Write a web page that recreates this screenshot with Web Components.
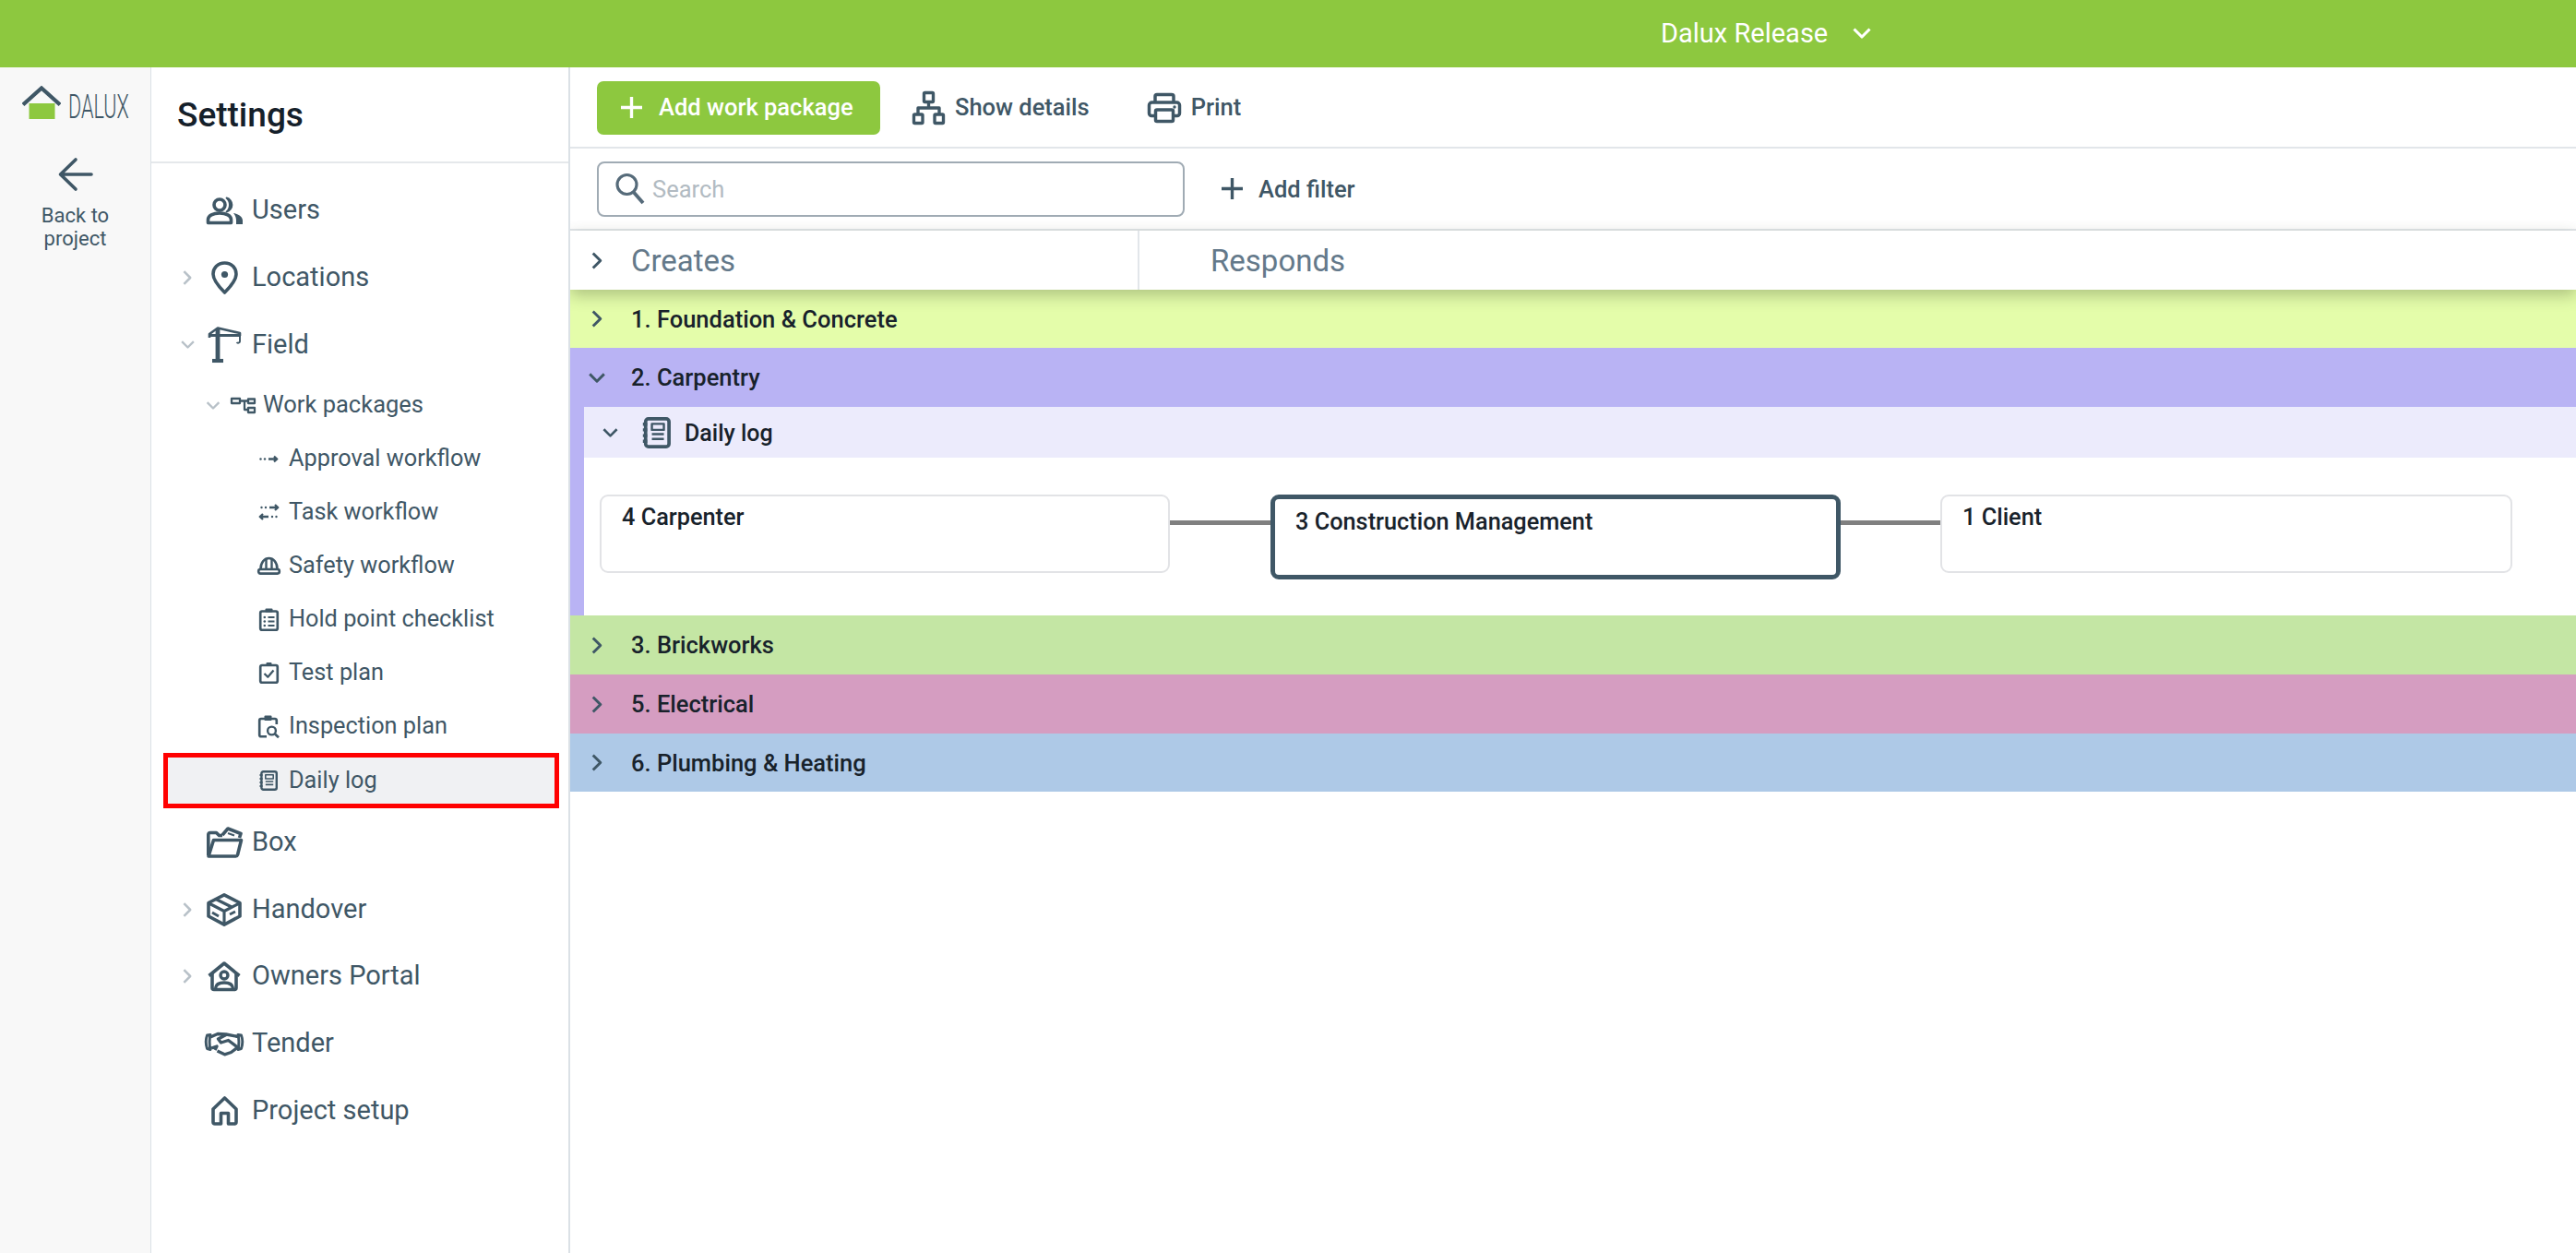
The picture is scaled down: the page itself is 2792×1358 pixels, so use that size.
<!DOCTYPE html>
<html lang="en">
<head>
<meta charset="utf-8">
<title>Dalux Settings</title>
<style>
  html, body { margin: 0; padding: 0; height: 100%; overflow: hidden; background: #fff; }
  body { font-family: Roboto, "Liberation Sans", sans-serif; color: #3f5766; }
</style>
</head>
<body>
<app-shell>
  <top-bar slot="top" label="Dalux Release"></top-bar>
  <side-rail slot="rail"></side-rail>
  <settings-panel slot="panel" heading="Settings">
    <nav-item level="0" icon="users" w="39" h="29">Users</nav-item>
    <nav-item level="0" icon="location" w="29" h="36" chev="r">Locations</nav-item>
    <nav-item level="0" icon="crane" w="37" h="39" chev="d">Field</nav-item>
    <nav-item level="1" icon="wp" w="27" h="17" chev="d">Work packages</nav-item>
    <nav-item level="2" icon="approval" w="20" h="7">Approval workflow</nav-item>
    <nav-item level="2" icon="task" w="21" h="19">Task workflow</nav-item>
    <nav-item level="2" icon="safety" w="25" h="20">Safety workflow</nav-item>
    <nav-item level="2" icon="hold" w="21" h="25">Hold point checklist</nav-item>
    <nav-item level="2" icon="test" w="21" h="23">Test plan</nav-item>
    <nav-item level="2" icon="inspection" w="23" h="25">Inspection plan</nav-item>
    <nav-item level="2" icon="daily" w="20" h="22" selected>Daily log</nav-item>
    <nav-item level="0" icon="box" w="39" h="34">Box</nav-item>
    <nav-item level="0" icon="handover" w="38" h="36" chev="r">Handover</nav-item>
    <nav-item level="0" icon="owners" w="36" h="32" chev="r">Owners Portal</nav-item>
    <nav-item level="0" icon="tender" w="42" h="26">Tender</nav-item>
    <nav-item level="0" icon="home" w="29" h="32">Project setup</nav-item>
  </settings-panel>
  <work-area slot="main">
    <work-toolbar></work-toolbar>
    <filter-bar></filter-bar>
    <column-head></column-head>
    <trade-row color="#e4fdaa" label="1. Foundation &amp; Concrete" h="63"></trade-row>
    <trade-row color="#b9b3f4" label="2. Carpentry" h="64" open>
      <package-row label="Daily log"></package-row>
      <workflow-lane>
        <workflow-card>4 Carpenter</workflow-card>
        <workflow-line></workflow-line>
        <workflow-card active>3 Construction Management</workflow-card>
        <workflow-line short></workflow-line>
        <workflow-card wide>1 Client</workflow-card>
      </workflow-lane>
    </trade-row>
    <trade-row color="#c4e6a4" label="3. Brickworks" h="64"></trade-row>
    <trade-row color="#d59dc1" label="5. Electrical" h="64"></trade-row>
    <trade-row color="#aec9e7" label="6. Plumbing &amp; Heating" h="63"></trade-row>
  </work-area>
</app-shell>

<script>
const ICONS = {
  'chev-r': ['0 0 12 20', '<path d="M1.5 1.5 L10 10 L1.5 18.5" stroke-width="2.6"/>'],
  'chev-d': ['0 0 20 12', '<path d="M1.5 1.5 L10 10 L18.5 1.5" stroke-width="2.6"/>'],
  plus: ['0 0 25 25', '<path d="M12.5 1 V24 M1 12.5 H24" stroke-width="2.8"/>'],
  back: ['0 0 38 36', '<path d="M36 18 H3 M19 2 L2.5 18 L19 34" stroke-width="3" stroke-linecap="round"/>'],
  users: ['0 0 39 29', '<circle cx="14" cy="8" r="6" stroke-width="3"/><path d="M1.5 27.5 V24 C1.5 19.5 7 17 14 17 S26.5 19.5 26.5 24 V27.5 Z" stroke-width="3"/><path d="M21.5 .5 A7.7 7.7 0 0 1 21.5 15.5 A10 10 0 0 0 21.5 .5 Z" fill="currentColor" stroke-width="1.5"/><path d="M29 17 C35 18 39 21 39 25 V29 H32 V25 C32 22 31 19 29 17 Z" fill="currentColor" stroke="none"/>'],
  location: ['0 0 29 36', '<path d="M14.5 2 C7 2 2 7.5 2 14 C2 21 9 28.5 14.5 34 C20 28.5 27 21 27 14 C27 7.5 22 2 14.5 2 Z" stroke-width="3"/><circle cx="14.5" cy="14.5" r="3.6" fill="currentColor" stroke="none"/>'],
  crane: ['0 0 37 39', '<path d="M11 3 V37" stroke-width="4"/><path d="M5 37 H17" stroke-width="3.4"/><path d="M2 12 V8 L11 1.5 L35 7 V10" stroke-width="2.2"/><path d="M1 9.5 H36" stroke-width="2.6"/><path d="M35 10 V16 A2 2 0 0 1 31.5 17" stroke-width="1.6"/>'],
  wp: ['0 0 27 17', '<rect x="1" y="1" width="9" height="5" stroke-width="1.9"/><path d="M10 3.5 H15 M15 3.5 V13 H19 M15 3.5 H19" stroke-width="1.9"/><rect x="19" y="1.5" width="7" height="4.5" stroke-width="1.9"/><rect x="19" y="11" width="7" height="5" stroke-width="1.9"/>'],
  approval: ['0 0 20 7', '<path d="M10 3.5 H19 M16 .7 L19.3 3.5 L16 6.3" stroke-width="1.9"/><circle cx="1.5" cy="3.5" r="1.2" fill="currentColor" stroke="none"/><circle cx="6" cy="3.5" r="1.2" fill="currentColor" stroke="none"/>'],
  task: ['0 0 21 19', '<path d="M11 4 H20 M17 1 L20.3 4 L17 7 M10 14 H1 M4 11 L.7 14 L4 17" stroke-width="1.9"/><circle cx="2.5" cy="4" r="1.2" fill="currentColor" stroke="none"/><circle cx="7" cy="4" r="1.2" fill="currentColor" stroke="none"/><circle cx="14" cy="14" r="1.2" fill="currentColor" stroke="none"/><circle cx="18.5" cy="14" r="1.2" fill="currentColor" stroke="none"/>'],
  safety: ['0 0 25 20', '<path d="M3.5 14 C3.5 6 8 2 12.5 2 S21.5 6 21.5 14" stroke-width="2.2"/><path d="M9.5 13 V2.5 M15.5 13 V2.5" stroke-width="2"/><rect x="1.2" y="14" width="22.6" height="4.6" rx="2" stroke-width="2.2"/>'],
  hold: ['0 0 21 25', '<rect x="1.2" y="3.5" width="18.6" height="20.2" rx="1.8" stroke-width="2.2"/><rect x="6.5" y=".5" width="8" height="4" rx="1" fill="currentColor" stroke="none"/><path d="M9.5 10 H16.5 M9.5 14.5 H16.5 M9.5 19 H16.5" stroke-width="1.8"/><circle cx="5.8" cy="10" r="1.3" fill="currentColor" stroke="none"/><circle cx="5.8" cy="14.5" r="1.3" fill="currentColor" stroke="none"/><circle cx="5.8" cy="19" r="1.3" fill="currentColor" stroke="none"/>'],
  test: ['0 0 21 23', '<rect x="1.2" y="3" width="18.6" height="18.8" rx="1.8" stroke-width="2.2"/><rect x="7.5" y="0" width="6" height="4" rx="1" fill="currentColor" stroke="none"/><path d="M5.5 12 L9.3 15.8 L15.5 8.5" stroke-width="1.9"/>'],
  inspection: ['0 0 23 25', '<path d="M7 4 H3 A1.8 1.8 0 0 0 1.2 5.8 V21.5 A1.8 1.8 0 0 0 3 23.3 H9 M14 4 H18 A1.8 1.8 0 0 1 19.8 5.8 V10" stroke-width="2.2"/><rect x="6.5" y=".5" width="8" height="5.5" rx="1" fill="currentColor" stroke="none"/><circle cx="14.5" cy="17" r="4.4" stroke-width="2"/><path d="M18 20.5 L22 24.3" stroke-width="2.2"/>'],
  daily: ['0 0 20 22', '<rect x="2.4" y="1.2" width="16.4" height="19.6" rx="2" stroke-width="2"/><rect x="6.8" y="4.8" width="8.4" height="4.2" stroke-width="1.3"/><path d="M6.8 12 H15.2 M6.8 15.4 H15.2" stroke-width="1.3"/><path d="M.5 5 H3.5 M.5 9 H3.5 M.5 13 H3.5 M.5 17 H3.5" stroke-width="1.8"/>'],
  box: ['0 0 39 34', '<path d="M1.8 31 V8.5 A2 2 0 0 1 3.8 6.5 H10.5 L13.5 9.5 H17" stroke-width="3"/><path d="M17 9 L23 2 L37 7.5 L35.5 12" stroke-width="3"/><path d="M23 7 L30 9.5" stroke-width="1.6"/><path d="M2 32 L7.5 14.5 H37.5 L33.5 30.5 A2.2 2.2 0 0 1 31.4 32 H2 Z" stroke-width="3"/>'],
  handover: ['0 0 38 36', '<path d="M19 1.8 L36 10.5 V25 L19 34.2 L2 25 V10.5 Z" stroke-width="3"/><path d="M2.5 11 L19 19.5 L35.5 11 M19 19.5 V33 M10 6.5 L27 15" stroke-width="2.6"/><path d="M25 23 L31 20 M6 21 L13 25" stroke-width="2.4"/>'],
  owners: ['0 0 36 32', '<path d="M1.5 15.5 L18 2 L34.5 15.5" stroke-width="3"/><path d="M5 13 V28.5 A2 2 0 0 0 7 30.5 H29 A2 2 0 0 0 31 28.5 V13" stroke-width="3"/><circle cx="18" cy="15" r="4" stroke-width="2.8"/><path d="M8.5 29 C9 25 13 23 18 23 S27 25 27.5 29" stroke-width="2.8"/>'],
  tender: ['0 0 42 26', '<path d="M2.5 4 C.8 8.5 .8 13.5 2.5 18.5 L6 19.5 C4.8 14 4.8 8.5 6 3.5 Z" stroke-width="2.4"/><path d="M39.5 4 C41.2 8.5 41.2 13.5 39.5 18.5 L36 19.5 C37.2 14 37.2 8.5 36 3.5 Z" stroke-width="2.4"/><path d="M6 6 L14 2.5 L23 3 L36 5.5 M24 3 L14.5 8 L17.5 12 L25.5 9.5 L36 17.5" stroke-width="2.8"/><path d="M7 18 L13 16 L11 20 M13.5 21 L21.5 24.8 L28.5 22.5 L35 17.5" stroke-width="2.8"/>'],
  home: ['0 0 29 32', '<path d="M2 14 L14.5 2 L27 14 V28 A2 2 0 0 1 25 30 H18.5 V18.5 H10.5 V30 H4 A2 2 0 0 1 2 28 Z" stroke-width="3"/>'],
  org: ['0 0 35 36', '<rect x="12.5" y="1.5" width="10" height="10" rx="1" stroke-width="2.8"/><path d="M17.5 11.5 V18 M6 25 V18 H29 V25" stroke-width="2.8"/><rect x="1.5" y="25" width="9.5" height="9.5" rx="1" stroke-width="2.8"/><rect x="24" y="25" width="9.5" height="9.5" rx="1" stroke-width="2.8"/>'],
  print: ['0 0 36 32', '<path d="M8 10 V3.5 A2 2 0 0 1 10 1.5 H26 A2 2 0 0 1 28 3.5 V10" stroke-width="2.9"/><path d="M8 24.5 H4.2 A2.7 2.7 0 0 1 1.5 21.8 V13 A3 3 0 0 1 4.5 10 H31.5 A3 3 0 0 1 34.5 13 V21.8 A2.7 2.7 0 0 1 31.8 24.5 H28" stroke-width="2.9"/><rect x="8.5" y="18" width="19" height="12.5" rx="1.5" stroke-width="2.9"/><circle cx="29" cy="15" r="1.7" fill="currentColor" stroke="none"/>'],
  search: ['0 0 32 33', '<circle cx="12.5" cy="12" r="10.5" stroke-width="2.6"/><path d="M19.5 20 L30 32" stroke-width="3.2"/>']
};

function define(name, css, html) {
  class C extends HTMLElement {
    constructor() {
      super();
      const r = this.attachShadow({ mode: 'open' });
      const a = (k, d = '') => this.getAttribute(k) ?? d;
      r.innerHTML = `<style>${css}</style>${typeof html === 'function' ? html(a, this) : html}`;
    }
  }
  customElements.define(name, C);
}

define('x-icon',
  `:host{display:inline-flex;flex:none;color:inherit}svg{display:block;fill:none;stroke:currentColor;stroke-linejoin:round;overflow:visible}`,
  a => {
    const [vb, raw] = ICONS[a('name')] || ['0 0 1 1', ''];
    const body = raw.replace(/stroke-width="([\d.]+)"/g, (m, v) => `stroke-width="${(parseFloat(v) * 1.2).toFixed(2)}"`);
    return `<svg width="${a('w', 24)}" height="${a('h', 24)}" viewBox="${vb}" aria-hidden="true">${body}</svg>`;
  });

define('app-shell',
  `:host{display:grid;grid-template-columns:164px 454px 1fr;grid-template-rows:73px 1fr;width:2792px;height:1358px;overflow:hidden}
   ::slotted([slot=top]){grid-column:1/4}`,
  `<slot name="top"></slot><slot name="rail"></slot><slot name="panel"></slot><slot name="main"></slot>`);

define('top-bar',
  `:host{display:flex;align-items:center;background:#8dc83f;color:#fff;height:73px;padding-left:1800px;box-sizing:border-box;
     font:400 29px/1 Roboto,sans-serif}
   span{display:block}x-icon{margin-left:27px;margin-top:-2px}`,
  a => `<span>${a('label')}</span><x-icon name="chev-d" w="20" h="12"></x-icon>`);

define('side-rail',
  `:host{display:flex;flex-direction:column;align-items:center;background:#f8f8f8;border-right:1px solid #dbe1e6;box-sizing:border-box;color:#3f5766}
   .logo{display:flex;align-items:flex-end;align-self:flex-start;margin:20px 0 0 24px;height:36px}
   .word{display:block;font:300 36px/26px Roboto,sans-serif;width:66px;margin-left:8px;height:26px;transform:scaleX(.6);transform-origin:0 50%;white-space:nowrap}
   .roof{color:#3f5766}
   .back{display:flex;flex-direction:column;align-items:center;margin-top:42px;width:100%}
   .back x-icon{margin-bottom:14px}
   .txt{font:400 22px/25px Roboto,sans-serif;text-align:center}`,
  `<div class="logo"><svg class="roof" width="42" height="36" viewBox="0 0 42 36" aria-hidden="true"><path d="M7.5 19 H35.5 V36 H7.5 Z" fill="#8dc83f"/><path d="M1 20.5 L21 2.5 L41 20.5" fill="none" stroke="currentColor" stroke-width="4.2"/></svg><span class="word">DALUX</span></div>
   <div class="back"><x-icon name="back" w="38" h="36"></x-icon><div class="txt">Back to<br>project</div></div>`);

define('settings-panel',
  `:host{display:flex;flex-direction:column;background:#fff;border-right:2px solid #dbe1e6;box-sizing:border-box}
   h1{margin:0;height:104px;border-bottom:2px solid #e5e8eb;box-sizing:border-box;padding:1px 0 0 28px;display:flex;align-items:center;
      font:500 37px/1 Roboto,sans-serif;color:#15202a}
   .list{display:flex;flex-direction:column;padding-top:15px}`,
  a => `<h1>${a('heading')}</h1><div class="list"><slot></slot></div>`);

define('nav-item',
  `:host{display:block;color:#3f5766}
   .row{display:grid;align-items:center;box-sizing:border-box;height:var(--h);grid-template-columns:var(--c) var(--i) 1fr;padding-left:var(--p);
     font:400 var(--f)/1 Roboto,sans-serif;white-space:nowrap}
   .chev{display:flex;justify-content:center;color:#b8c1c8}
   .ico{display:flex;justify-content:center;align-items:center}
   .txt{padding-left:var(--t);padding-bottom:1px}
   :host([level="0"]) .row{--h:72.8px;--c:26px;--i:54px;--p:26px;--f:29px;--t:3px}
   :host([level="1"]) .row{--h:58px;--c:32px;--i:33px;--p:51px;--f:25.5px;--t:5px}
   :host([level="2"]) .row{--h:58px;--c:0px;--i:42px;--p:106px;--f:25.3px;--t:1px}
   :host([selected]) .row{height:60px;margin:0 10px 0 13px;border:5px solid #ff0000;background:#f0f1f3;padding-left:88px}`,
  (a) => {
    const c = a('chev');
    const chev = c === 'r' ? '<x-icon name="chev-r" w="10" h="16"></x-icon>' : c === 'd' ? `<x-icon name="chev-d" w="${a('level') === '0' ? 17 : 16}" h="9"></x-icon>` : '';
    return `<div class="row"><span class="chev">${chev}</span><span class="ico"><x-icon name="${a('icon')}" w="${a('w')}" h="${a('h')}"></x-icon></span><span class="txt"><slot></slot></span></div>`;
  });

define('work-area', `:host{display:flex;flex-direction:column;background:#fff;min-width:0;overflow:hidden}`, `<slot></slot>`);

define('tool-btn',
  `:host{display:inline-flex;align-items:center;font:500 25.5px/1 Roboto,sans-serif;color:#3f5766;white-space:nowrap}
   :host([primary]){background:#8dc83f;color:#fff;height:58px;border-radius:7px;box-sizing:border-box;padding:0 0 0 25px;width:307px}
   .l{margin-left:var(--g,11px)}`,
  a => `<x-icon name="${a('icon')}" w="${a('w')}" h="${a('h')}"></x-icon><span class="l"><slot></slot></span>`);

define('work-toolbar',
  `:host{display:flex;align-items:center;height:88px;padding:1px 0 0 29px;box-sizing:border-box;border-bottom:2px solid #e2e6ea}
   .a{margin-left:35px}.b{margin-left:63px}`,
  `<tool-btn primary icon="plus" w="25" h="25" style="--g:17px">Add work package</tool-btn>
   <tool-btn class="a" icon="org" w="35" h="36">Show details</tool-btn>
   <tool-btn class="b" icon="print" w="36" h="32">Print</tool-btn>`);

define('filter-bar',
  `:host{display:flex;align-items:center;height:89px;padding-left:29px;box-sizing:border-box;border-bottom:2px solid #e2e6ea;color:#3f5766}
   .s{display:flex;align-items:center;box-sizing:border-box;width:637px;height:60px;border:2px solid #a0abb4;border-radius:8px;padding-left:18px;
     font:400 25.5px/1 Roboto,sans-serif;color:#b2bbc2}
   .s x-icon{color:#566b7a;margin-right:8px}
   .s span{padding-top:3px}
   .f{display:flex;align-items:center;margin-left:39px;font:500 25.5px/1 Roboto,sans-serif}
   .f span{margin-left:16px;padding-top:3px}`,
  `<div class="s"><x-icon name="search" w="32" h="33"></x-icon><span>Search</span></div>
   <div class="f"><x-icon name="plus" w="25" h="25"></x-icon><span>Add filter</span></div>`);

define('column-head',
  `:host{display:grid;grid-template-columns:617px 1fr;height:64px;position:relative;z-index:2;background:#fff;box-shadow:0 6px 16px rgba(60,70,40,.32);
     font:400 33px/1 Roboto,sans-serif;color:#64798a}
   .a{display:flex;align-items:center;padding-left:23px;border-right:2px solid #e2e6ea;box-sizing:border-box}
   .a x-icon{color:#3f5766;margin-right:31px}
   .b{display:flex;align-items:center;padding-left:77px}`,
  `<div class="a"><x-icon name="chev-r" w="12" h="19"></x-icon><span>Creates</span></div><div class="b">Responds</div>`);

define('trade-row',
  `:host{display:block}
   .h{display:flex;align-items:center;box-sizing:border-box;font:500 25.5px/1 Roboto,sans-serif;color:#18222b;height:var(--rh);background:var(--col)}
   .h .t{padding-top:2px}
   .cv{padding-left:14px;box-sizing:border-box;display:flex;justify-content:center;width:44px;color:#3f5766;margin-right:22px}
   .body{border-left:15px solid var(--col);display:block}`,
  (a, el) => {
    const open = el.hasAttribute('open');
    const icon = open ? '<x-icon name="chev-d" w="20" h="11"></x-icon>' : '<x-icon name="chev-r" w="12" h="19"></x-icon>';
    return `<div class="h" style="--rh:${a('h')}px;--col:${a('color')}"><span class="cv">${icon}</span><span class="t">${a('label')}</span></div>` +
      (open ? `<div class="body" style="--col:${a('color')}"><slot></slot></div>` : '');
  });

define('package-row',
  `:host{display:flex;align-items:center;height:55px;background:#ecebfc;font:500 25px/1 Roboto,sans-serif;color:#18222b}
   .c{color:#3f5766;margin-left:20px;width:17px;display:flex}
   .i{color:#3f5766;margin-left:26px;width:31px;display:flex}
   .t{margin-left:15px;padding-top:2px}`,
  a => `<span class="c"><x-icon name="chev-d" w="17" h="10"></x-icon></span><span class="i"><x-icon name="daily" w="31" h="34"></x-icon></span><span class="t">${a('label')}</span>`);

define('workflow-lane',
  `:host{display:flex;align-items:flex-start;box-sizing:border-box;height:171px;padding:40px 0 0 17px;background:#fff}`,
  `<slot></slot>`);

define('workflow-card',
  `:host{display:block;box-sizing:border-box;width:618px;height:85px;border:2px solid #e2e3e6;border-radius:9px;padding:8px 22px;background:#fff;
     font:500 25.3px/30px Roboto,sans-serif;color:#18222b;flex:none}
   :host([wide]){width:620px}
   :host([active]){width:618px;height:92px;border:5px solid #3f5766;padding:10px 22px}`,
  `<slot></slot>`);

define('workflow-line',
  `:host{display:block;width:109px;height:5px;margin-top:28px;background:#808080;flex:none}
   :host([short]){width:108px}`,
  ``);
</script>
</body>
</html>
